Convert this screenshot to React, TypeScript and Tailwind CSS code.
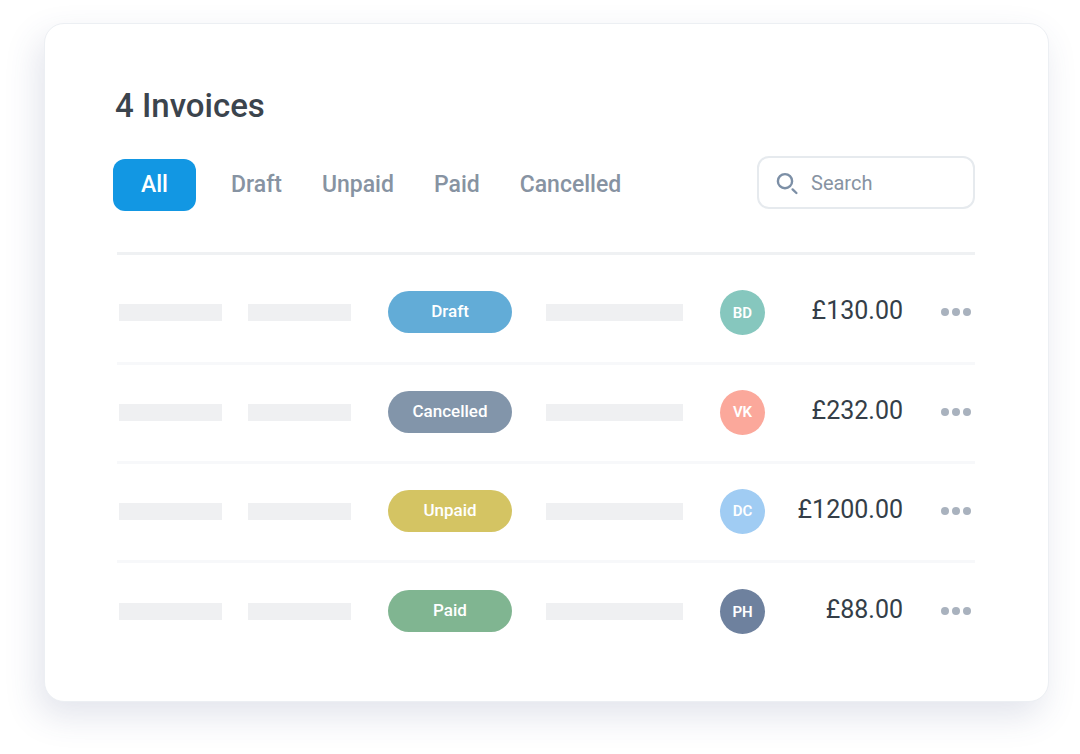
import { useState } from "react";

type Status = "Draft" | "Cancelled" | "Unpaid" | "Paid";

interface Invoice {
  status: Status;
  initials: string;
  avatar: string;
  amount: string;
}

const invoices: Invoice[] = [
  { status: "Draft", initials: "BD", avatar: "bg-[#86c7be]", amount: "£130.00" },
  { status: "Cancelled", initials: "VK", avatar: "bg-[#fba89b]", amount: "£232.00" },
  { status: "Unpaid", initials: "DC", avatar: "bg-[#a0ccf3]", amount: "£1200.00" },
  { status: "Paid", initials: "PH", avatar: "bg-[#6e819e]", amount: "£88.00" },
];

const statusColors: Record<Status, string> = {
  Draft: "bg-[#62acd7]",
  Cancelled: "bg-[#8295aa]",
  Unpaid: "bg-[#d4c463]",
  Paid: "bg-[#80b591]",
};

const filters = ["Draft", "Unpaid", "Paid", "Cancelled"];

function Placeholder() {
  return <div className="h-[17px] w-full bg-[#eff0f2]" />;
}

function SearchIcon() {
  return (
    <svg className="size-6 shrink-0" viewBox="0 0 24 24" fill="none" stroke="#7c8fa6" aria-hidden="true">
      <circle cx="10" cy="10.2" r="7.1" strokeWidth="2.4" />
      <path d="M17.6 18.4 L21.4 22" strokeWidth="2.4" strokeLinecap="round" />
    </svg>
  );
}

function InvoiceRow({ invoice }: { invoice: Invoice }) {
  return (
    <tr className="h-[99px] border-b-[3px] border-[#f7f8fa] last:h-[100px] last:border-b-0">
      <td className="pr-[26px] pl-0.5">
        <Placeholder />
      </td>
      <td className="pr-[37px]">
        <Placeholder />
      </td>
      <td className="pr-[34px] pb-0.5">
        <div
          className={`flex h-[42px] items-center justify-center rounded-full text-[17px] font-medium text-white ${statusColors[invoice.status]}`}
        >
          {invoice.status}
        </div>
      </td>
      <td className="pr-[37px]">
        <Placeholder />
      </td>
      <td>
        <div
          className={`flex size-[45px] items-center justify-center rounded-full text-[15px] font-semibold text-white ${invoice.avatar}`}
        >
          {invoice.initials}
        </div>
      </td>
      <td className="pb-1 text-right text-[25px] text-[#343e48]">{invoice.amount}</td>
      <td className="pb-0.5 pl-[38px]">
        <button type="button" aria-label="More actions" className="flex h-6 items-center gap-[3px]">
          <span className="size-2 rounded-full bg-[#a9b2be]" />
          <span className="size-2 rounded-full bg-[#a9b2be]" />
          <span className="size-2 rounded-full bg-[#a9b2be]" />
        </button>
      </td>
    </tr>
  );
}

export default function App() {
  const [query, setQuery] = useState("");

  return (
    <div className="bg-white pt-[23px] pr-[31px] pb-[52px] pl-11 font-['Roboto',sans-serif]">
      <main className="rounded-[20px] border border-[#eceff3] bg-white pt-[62px] pr-[73px] pb-10 pl-[72px] shadow-[-6px_14px_34px_rgba(60,75,130,0.15)]">
        <h1 className="-ml-0.5 text-[33px] leading-10 font-medium text-[#3b444d]">4 Invoices</h1>

        <div className="mt-[30px] flex items-start justify-between">
          <nav className="-ml-1 flex items-center gap-10 pt-[3px] text-[23px] font-medium text-[#8793a2]">
            <button
              type="button"
              className="-mr-[5px] h-[52px] w-[83px] rounded-xl bg-[#1297e3] text-[23px] text-white"
            >
              All
            </button>
            {filters.map((name) => (
              <button type="button" key={name}>
                {name}
              </button>
            ))}
          </nav>
          <label className="flex h-[53px] w-[218px] items-center gap-3 rounded-xl border-2 border-[#e6eaee] pr-3 pl-4">
            <SearchIcon />
            <input
              type="text"
              aria-label="Search"
              placeholder="Search"
              value={query}
              onChange={(e) => setQuery(e.target.value)}
              className="w-full min-w-0 bg-transparent text-[20px] text-[#343e48] outline-none placeholder:text-[#8793a2]"
            />
          </label>
        </div>

        <div className="mt-[41px] border-t-[3px] border-[#eff1f3] pt-[9px]">
          <table className="w-full table-fixed border-collapse">
            <colgroup>
              <col className="w-[131px]" />
              <col className="w-[140px]" />
              <col className="w-[158px]" />
              <col />
              <col className="w-[46px]" />
              <col className="w-[137px]" />
              <col className="w-[72px]" />
            </colgroup>
            <tbody>
              {invoices.map((invoice) => (
                <InvoiceRow key={invoice.initials} invoice={invoice} />
              ))}
            </tbody>
          </table>
        </div>
      </main>
    </div>
  );
}
